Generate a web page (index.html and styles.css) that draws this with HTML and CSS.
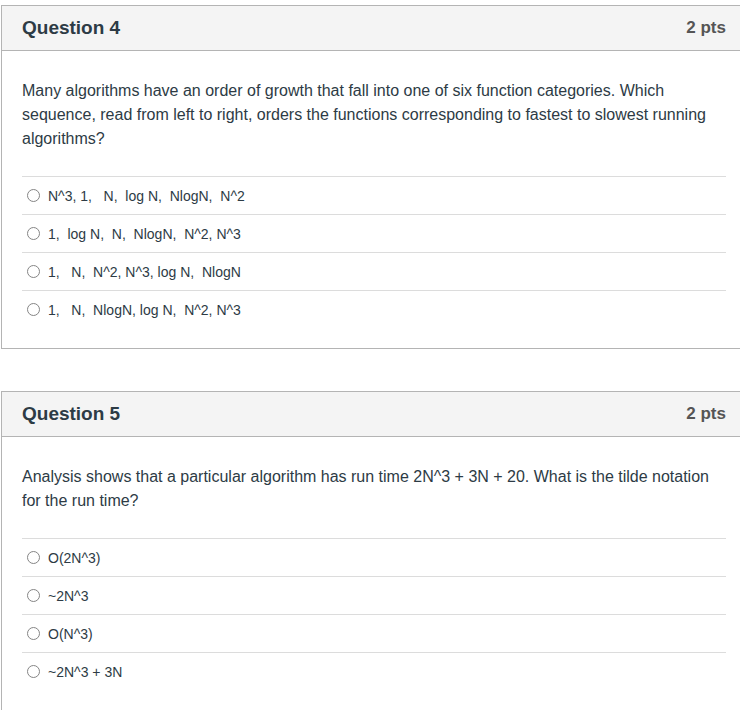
FILE: index.html
```html
<!DOCTYPE html>
<html>
<head>
<meta charset="utf-8">
<link rel="stylesheet" href="styles.css">
</head>
<body>
<div class="page">
  <div class="question">
    <div class="q-header">
      <h2 class="q-title">Question 4</h2>
      <span class="q-points">2 pts</span>
    </div>
    <div class="q-body">
      <p class="q-text">Many algorithms have an order of growth that fall into one of six function categories. Which sequence, read from left to right, orders the functions corresponding to fastest to slowest running algorithms?</p>
      <div class="answers">
        <label class="answer"><span class="radio"></span><span class="a-text">N^3, 1,   N,  log N,  NlogN,  N^2</span></label>
        <label class="answer"><span class="radio"></span><span class="a-text">1,  log N,  N,  NlogN,  N^2, N^3</span></label>
        <label class="answer"><span class="radio"></span><span class="a-text">1,   N,  N^2, N^3, log N,  NlogN</span></label>
        <label class="answer"><span class="radio"></span><span class="a-text">1,   N,  NlogN, log N,  N^2, N^3</span></label>
      </div>
    </div>
  </div>
  <div class="question">
    <div class="q-header">
      <h2 class="q-title">Question 5</h2>
      <span class="q-points">2 pts</span>
    </div>
    <div class="q-body">
      <p class="q-text">Analysis shows that a particular algorithm has run time 2N^3 + 3N + 20. What is the tilde notation for the run time?</p>
      <div class="answers">
        <label class="answer"><span class="radio"></span><span class="a-text">O(2N^3)</span></label>
        <label class="answer"><span class="radio"></span><span class="a-text">~2N^3</span></label>
        <label class="answer"><span class="radio"></span><span class="a-text">O(N^3)</span></label>
        <label class="answer"><span class="radio"></span><span class="a-text">~2N^3 + 3N</span></label>
      </div>
    </div>
  </div>
</div>
</body>
</html>
```

FILE: styles.css
```css
html, body {
  margin: 0;
  padding: 0;
  overflow: hidden;
  background: #ffffff;
}
body {
  font-family: "Liberation Sans", Arial, sans-serif;
  color: #2d3b45;
}
.page {
  padding: 5px 0 0 1px;
  width: 760px;
}
.question {
  width: 745px;
  border: 1px solid #b4b4b4;
  box-sizing: border-box;
}
.question + .question {
  margin-top: 42px;
}
.q-header {
  height: 44px;
  background: #f4f4f4;
  border-bottom: 1px solid #b4b4b4;
  display: flex;
  align-items: center;
  justify-content: space-between;
  padding: 0 19px 0 20px;
}
.q-title {
  margin: 0;
  font-size: 19px;
  font-weight: bold;
  color: #2d3b45;
}
.q-points {
  font-size: 17px;
  font-weight: bold;
  color: #555555;
}
.q-body {
  padding: 28px 19px 20px 20px;
}
.q-text {
  margin: 0 0 25px 0;
  font-size: 16px;
  line-height: 24px;
}
.answer {
  display: flex;
  align-items: center;
  height: 38px;
  box-sizing: border-box;
  border-top: 1px solid #dcdcdc;
  padding-left: 5px;
  font-size: 14px;
}
.radio {
  width: 11px;
  height: 11px;
  border: 1px solid #858585;
  border-radius: 50%;
  flex: none;
  margin-right: 8px;
}
.a-text {
  white-space: pre;
}
```
